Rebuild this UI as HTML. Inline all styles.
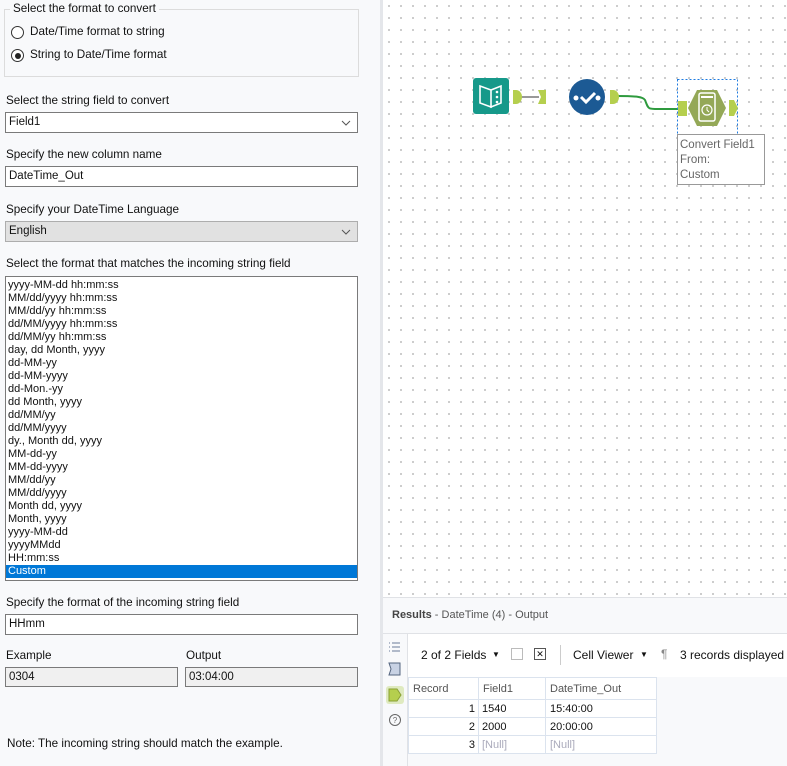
<!DOCTYPE html>
<html><head><style>
*{margin:0;padding:0;box-sizing:border-box}
body{width:787px;height:766px;overflow:hidden;font-family:"Liberation Sans",sans-serif;font-size:11.7px;color:#111;background:#f8f9fb;position:relative}
.a{position:absolute}
.lbl{position:absolute;left:6px;font-size:11.7px}
.inp{position:absolute;left:5px;width:353px;height:21px;line-height:19px;border:1px solid #7a7a7a;background:#fff;padding:0 3px;font-size:11.5px}
.chev{position:absolute;right:6px;top:5px}
#list{left:5px;top:276px;width:353px;height:305px;border:1px solid #7a7a7a;background:#fff;padding-top:2px;overflow:hidden}
#list div{height:13px;line-height:13px;padding-left:2px;font-size:11px;white-space:nowrap}
#canvas{left:383px;top:0;width:404px;height:597px;background-color:#fff;background-image:radial-gradient(circle,#8c8c8c 0.6px,transparent 0.9px);background-size:12px 12px;background-position:0 0}
</style></head><body>
<div class="a" style="left:4px;top:9px;width:355px;height:68px;border:1px solid #dcdcdc"></div>
<div class="a" style="left:10px;top:2px;background:#f8f9fb;padding:0 3px">Select the format to convert</div>
<div class="a" style="left:11px;top:26px;width:13px;height:13px;border:1px solid #333;border-radius:50%;background:#fff"></div>
<div class="a" style="left:30px;top:25px">Date/Time format to string</div>
<div class="a" style="left:11px;top:49px;width:13px;height:13px;border:1px solid #333;border-radius:50%;background:#fff"><div style="position:absolute;left:2.5px;top:2.5px;width:6px;height:6px;border-radius:50%;background:#222"></div></div>
<div class="a" style="left:30px;top:48px">String to Date/Time format</div>

<div class="lbl" style="top:94px">Select the string field to convert</div>
<div class="inp" style="top:112px">Field1<svg class="chev" width="10" height="10" viewBox="0 0 10 10"><path d="M1 3l4 4 4-4" fill="none" stroke="#555"/></svg></div>
<div class="lbl" style="top:148px">Specify the new column name</div>
<div class="inp" style="top:166px">DateTime_Out</div>
<div class="lbl" style="top:203px">Specify your DateTime Language</div>
<div class="inp" style="top:221px;background:#e1e1e1;border-color:#adadad">English<svg class="chev" width="10" height="10" viewBox="0 0 10 10"><path d="M1 3l4 4 4-4" fill="none" stroke="#555"/></svg></div>
<div class="lbl" style="top:257px">Select the format that matches the incoming string field</div>
<div id="list" class="a">
<div>yyyy-MM-dd hh:mm:ss</div><div>MM/dd/yyyy hh:mm:ss</div><div>MM/dd/yy hh:mm:ss</div><div>dd/MM/yyyy hh:mm:ss</div><div>dd/MM/yy hh:mm:ss</div><div>day, dd Month, yyyy</div><div>dd-MM-yy</div><div>dd-MM-yyyy</div><div>dd-Mon.-yy</div><div>dd Month, yyyy</div><div>dd/MM/yy</div><div>dd/MM/yyyy</div><div>dy., Month dd, yyyy</div><div>MM-dd-yy</div><div>MM-dd-yyyy</div><div>MM/dd/yy</div><div>MM/dd/yyyy</div><div>Month dd, yyyy</div><div>Month, yyyy</div><div>yyyy-MM-dd</div><div>yyyyMMdd</div><div>HH:mm:ss</div><div style="background:#0078d7;color:#fff">Custom</div>
</div>
<div class="lbl" style="top:596px">Specify the format of the incoming string field</div>
<div class="inp" style="top:614px">HHmm</div>
<div class="lbl" style="top:649px">Example</div>
<div class="a" style="left:186px;top:649px">Output</div>
<div class="inp" style="top:667px;width:173px;height:20px;line-height:18px;background:#f0f0f0">0304</div>
<div class="inp" style="left:185px;top:667px;width:173px;height:20px;line-height:18px;background:#f0f0f0">03:04:00</div>
<div class="lbl" style="left:7px;top:737px">Note: The incoming string should match the example.</div>

<div class="a" style="left:380px;top:0;width:3px;height:766px;background:#e4e6ea"></div>

<div id="canvas" class="a"></div>
<svg class="a" style="left:383px;top:0" width="404" height="200">
<line x1="132" y1="97" x2="156" y2="97" stroke="#999" stroke-width="2"/>
<path d="M233 96 C255 96,260 97,262 100 C266 110,264 109,280 109 L296 109" fill="none" stroke="#2e9a3e" stroke-width="2"/>
<rect x="90" y="78" width="36" height="36" rx="3" fill="#16998a"/>
<path d="M97 86 l11 4 v17 l-11-4z M108 90 l10-4 v17 l-10 4z" fill="none" stroke="#fff" stroke-width="1.6"/>
<circle cx="114" cy="92" r="1.3" fill="#fff"/><circle cx="114" cy="97" r="1.3" fill="#fff"/><circle cx="114" cy="102" r="1.3" fill="#fff"/>
<path d="M130 90 h3 a6 7 0 0 1 0 14 h-3z" fill="#b5cf4e"/>
<path d="M155 90 h8 v14 h-8 l3 -7z" fill="#b5cf4e"/>
<circle cx="204" cy="97" r="18" fill="#1c5a94"/>
<circle cx="193" cy="98" r="2.5" fill="#fff"/><circle cx="215" cy="98" r="2.5" fill="#fff"/>
<path d="M198 97 l5 5 l9 -9" fill="none" stroke="#fff" stroke-width="3"/>
<path d="M227 90 h3 a6 7 0 0 1 0 14 h-3z" fill="#b5cf4e"/>
<rect x="294.5" y="79.5" width="60" height="55" fill="none" stroke="#1e7be0" stroke-dasharray="2,2"/>
<path d="M295 101 h9 v15 h-9z" fill="#b5cf4e"/>
<path d="M314 90 h20 l9 18 l-9 18 h-20 l-9 -18z" fill="#94a857"/>
<rect x="316" y="93" width="16" height="28" rx="2" fill="none" stroke="#fff" stroke-width="1.5"/>
<rect x="318" y="96" width="12" height="2" fill="#fff"/>
<circle cx="324" cy="110" r="5" fill="none" stroke="#fff" stroke-width="1.2"/>
<path d="M324 107 v3 l2 2" fill="none" stroke="#fff"/>
<path d="M346 100 h5 l4 8 l-4 8 h-5z" fill="#b5cf4e"/>
<rect x="294.5" y="134.5" width="87" height="50" fill="#fff" stroke="#999"/>
<text x="297" y="148" font-family="Liberation Sans, sans-serif" font-size="11.5" fill="#666">Convert Field1</text>
<text x="297" y="163" font-family="Liberation Sans, sans-serif" font-size="11.5" fill="#666">From:</text>
<text x="297" y="178" font-family="Liberation Sans, sans-serif" font-size="11.5" fill="#666">Custom</text>
</svg>

<div class="a" style="left:383px;top:597px;width:404px;height:169px;background:#f8f9fb;border-top:1px solid #e0e2e6"></div>
<div class="a" style="left:392px;top:609px;color:#555;font-size:11px"><b style="color:#444">Results</b> - DateTime (4) - Output</div>
<div class="a" style="left:383px;top:633px;width:404px;height:1px;background:#e0e2e6"></div>
<div class="a" style="left:407px;top:634px;width:1px;height:132px;background:#e0e2e6"></div>
<div class="a" style="left:408px;top:634px;width:379px;height:43px;background:#fff"></div>
<svg class="a" style="left:383px;top:634px" width="24" height="100">
<g stroke="#6a7a9a"><line x1="9" y1="9" x2="17" y2="9"/><line x1="9" y1="13" x2="17" y2="13"/><line x1="9" y1="17" x2="17" y2="17"/><line x1="6" y1="9" x2="7" y2="9"/><line x1="6" y1="13" x2="7" y2="13"/><line x1="6" y1="17" x2="7" y2="17"/></g>
<path d="M6 29 h11 v12 h-11 l2 -6z" fill="#c8d2e4" stroke="#55657f"/>
<rect x="3" y="52" width="18" height="18" rx="3" fill="#dfeac0"/>
<path d="M6 55 h8 l4 6 l-4 6 h-8z" fill="#b5cf4e" stroke="#8aa036"/>
<circle cx="12" cy="86" r="5.5" fill="none" stroke="#666"/>
<text x="12" y="89" font-size="8" text-anchor="middle" fill="#666" font-family="Liberation Sans">?</text>
</svg>
<div class="a" style="left:421px;top:648px;font-size:12px">2 of 2 Fields</div>
<div class="a" style="left:492px;top:650px;font-size:8px">▼</div>
<div class="a" style="left:511px;top:648px;width:12px;height:12px;border:1px solid #bbb"></div>
<div class="a" style="left:534px;top:648px;width:12px;height:12px;border:1px solid #555;font-size:9px;line-height:10px;text-align:center">✕</div>
<div class="a" style="left:560px;top:645px;width:1px;height:20px;background:#ccc"></div>
<div class="a" style="left:573px;top:648px;font-size:12px">Cell Viewer</div>
<div class="a" style="left:640px;top:650px;font-size:8px">▼</div>
<div class="a" style="left:661px;top:647px;font-size:12px;color:#888">¶</div>
<div class="a" style="left:680px;top:648px;font-size:12px">3 records displayed</div>
<table class="a" style="left:408px;top:677px;border-collapse:collapse;font-size:11px;background:#fff">
<tr style="height:22px;color:#555"><td style="width:70px;border:1px solid #dbe3ee;padding-left:4px">Record</td><td style="width:67px;border:1px solid #dbe3ee;padding-left:4px">Field1</td><td style="width:111px;border:1px solid #dbe3ee;padding-left:4px">DateTime_Out</td></tr>
<tr style="height:18px"><td style="border:1px solid #dbe3ee;text-align:right;padding-right:3px">1</td><td style="border:1px solid #dbe3ee;padding-left:3px">1540</td><td style="border:1px solid #dbe3ee;padding-left:4px">15:40:00</td></tr>
<tr style="height:18px"><td style="border:1px solid #dbe3ee;text-align:right;padding-right:3px">2</td><td style="border:1px solid #dbe3ee;padding-left:3px">2000</td><td style="border:1px solid #dbe3ee;padding-left:4px">20:00:00</td></tr>
<tr style="height:18px"><td style="border:1px solid #dbe3ee;text-align:right;padding-right:3px">3</td><td style="border:1px solid #dbe3ee;padding-left:3px;color:#aab">[Null]</td><td style="border:1px solid #dbe3ee;padding-left:4px;color:#aab">[Null]</td></tr>
</table>
</body></html>
